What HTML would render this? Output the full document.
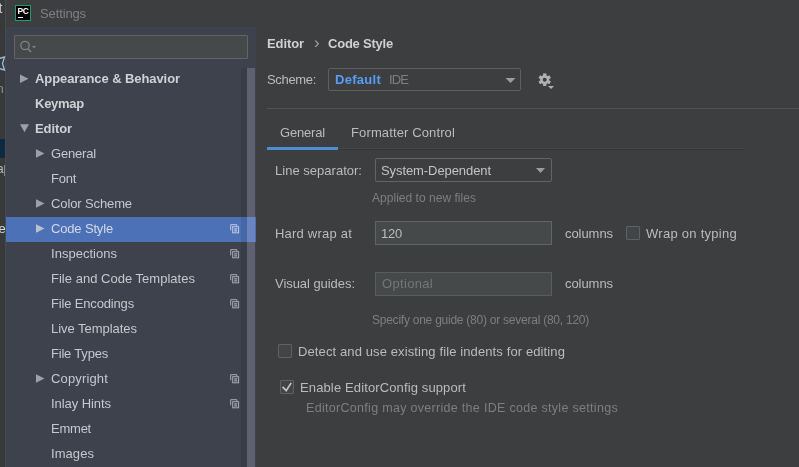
<!DOCTYPE html>
<html><head><meta charset="utf-8"><title>Settings</title>
<style>
html,body{margin:0;padding:0;}
body{width:799px;height:467px;overflow:hidden;position:relative;background:#3c3e40;font-family:"Liberation Sans",sans-serif;}
#root{position:absolute;left:0;top:0;width:799px;height:467px;overflow:hidden;will-change:transform;}
.abs{position:absolute;}
.t{position:absolute;white-space:pre;line-height:20px;height:20px;}
#strip{left:0;top:0;width:6px;height:467px;background:#37393b;overflow:hidden;}
#left{left:6px;top:27px;width:250px;height:440px;background:#3e424c;}
#band{left:241px;top:68px;width:6px;height:399px;background:rgba(20,20,30,0.10);}
#search{left:14px;top:35px;width:232px;height:22px;border:1px solid #646464;background:#45494a;border-radius:1px;}
#sel{left:6px;top:216.6px;width:250px;height:25px;background:#4c71b7;}
#sb{left:247px;top:68px;width:8px;height:399px;background:rgba(195,190,220,0.25);}
.box{position:absolute;border:1px solid #646464;background:#45494a;box-sizing:border-box;}
.cb{position:absolute;width:14px;height:14px;border:1px solid #5f6264;background:#424547;box-sizing:border-box;border-radius:1px;}
svg{position:absolute;overflow:visible;}
</style></head><body><div id="root">
<div class="abs" id="strip"></div>
<div class="abs" style="left:0;top:56px;width:5px;height:20px;background:#333b47;"></div>
<div class="abs" style="left:0;top:139px;width:5px;height:19px;background:#0f2a3f;"></div>
<div class="abs" style="left:5px;top:0;width:1px;height:467px;background:#474b4e;"></div>
<div class="abs" id="left"></div>
<div class="abs" id="search"></div>
<div class="abs" id="sel"></div>
<div class="abs" id="band"></div>
<div class="abs" id="sb"></div>
<!-- title icon -->
<div class="abs" style="left:15px;top:5px;width:16px;height:16px;background:#1f9a74;"></div>
<div class="abs" style="left:16px;top:6px;width:14px;height:14px;background:#000;"></div>
<span class="t" style="left:17.5px;top:6.5px;font-size:8.5px;font-weight:700;color:#fff;line-height:9px;height:9px;letter-spacing:-0.5px;">PC</span>
<div class="abs" style="left:18px;top:16.5px;width:5px;height:1.2px;background:#fff;"></div>
<!-- right -->
<div class="box" style="left:328px;top:68px;width:193px;height:23px;background:#3c3e40;border-color:#5e6060;border-radius:2px;"></div>
<div class="abs" style="left:267px;top:108px;width:532px;height:1px;background:#505254;"></div>
<div class="abs" style="left:267px;top:148px;width:477px;height:1px;background:#444648;"></div>
<div class="abs" style="left:267px;top:149px;width:477px;height:1px;background:#333537;"></div>
<div class="abs" style="left:267px;top:147px;width:71px;height:3px;background:#4e8ed0;"></div>
<div class="box" style="left:375px;top:158px;width:177px;height:24px;border-radius:2px;background:#3c3e40;"></div>
<div class="box" style="left:375px;top:221px;width:177px;height:24px;"></div>
<div class="box" style="left:375px;top:272px;width:177px;height:24px;border-color:#5a5c5e;"></div>
<div class="cb" style="left:626px;top:226px;"></div>
<div class="cb" style="left:278px;top:344px;"></div>
<div class="cb" style="left:280px;top:380px;"></div>
<!-- search icon -->
<svg style="left:0;top:0" width="799" height="467" viewBox="0 0 799 467">
 <circle cx="25" cy="45.5" r="4.2" fill="none" stroke="#7f8386" stroke-width="1.3"/>
 <path d="M28 48.8 L31 52" stroke="#7f8386" stroke-width="1.5" fill="none"/>
 <path d="M32 46 L36 46 L34 48.3 Z" fill="#7f8386"/>
 <path d="M-1 58.5 L4.5 57 L2.5 63.5 L4.5 70 L-1 68.5" fill="none" stroke="#a9b7cc" stroke-width="1.3"/>
 <path d="M4.5 165 V176" stroke="#9a9a9a" stroke-width="0.8"/>
 <!-- tree arrows -->
 <g fill="#9da0a8">
  <path d="M20 74.5 L28.5 78.8 L20 83.1 Z"/>
  <path d="M20 124.2 L29 124.2 L24.5 132.2 Z"/>
  <path d="M36 149.2 L44.5 153.5 L36 157.8 Z"/>
  <path d="M36 199.2 L44.5 203.5 L36 207.8 Z"/>
  <path d="M36 224.2 L44.5 228.5 L36 232.8 Z" fill="#b9c0cf"/>
  <path d="M36 374.2 L44.5 378.5 L36 382.8 Z"/>
 </g>
 <g fill="none" stroke="#c3cbe0" stroke-width="1"><path d="M230.7 230.3 V224.7 H236.8 V226.2"/><rect x="232.7" y="226.7" width="5.9" height="6.1"/><path d="M234.2 228.9 H237.2 M234.2 230.9 H237.2" stroke-width="1.1"/></g>
<g fill="none" stroke="#a9acb2" stroke-width="1"><path d="M230.7 255.3 V249.7 H236.8 V251.2"/><rect x="232.7" y="251.7" width="5.9" height="6.1"/><path d="M234.2 253.9 H237.2 M234.2 255.9 H237.2" stroke-width="1.1"/></g>
<g fill="none" stroke="#a9acb2" stroke-width="1"><path d="M230.7 280.3 V274.7 H236.8 V276.2"/><rect x="232.7" y="276.7" width="5.9" height="6.1"/><path d="M234.2 278.9 H237.2 M234.2 280.9 H237.2" stroke-width="1.1"/></g>
<g fill="none" stroke="#a9acb2" stroke-width="1"><path d="M230.7 305.3 V299.7 H236.8 V301.2"/><rect x="232.7" y="301.7" width="5.9" height="6.1"/><path d="M234.2 303.9 H237.2 M234.2 305.9 H237.2" stroke-width="1.1"/></g>
<g fill="none" stroke="#a9acb2" stroke-width="1"><path d="M230.7 380.3 V374.7 H236.8 V376.2"/><rect x="232.7" y="376.7" width="5.9" height="6.1"/><path d="M234.2 378.9 H237.2 M234.2 380.9 H237.2" stroke-width="1.1"/></g>
<g fill="none" stroke="#a9acb2" stroke-width="1"><path d="M230.7 405.3 V399.7 H236.8 V401.2"/><rect x="232.7" y="401.7" width="5.9" height="6.1"/><path d="M234.2 403.9 H237.2 M234.2 405.9 H237.2" stroke-width="1.1"/></g>
 <!-- combobox arrows -->
 <path d="M505.5 78 L515.5 78 L510.5 83 Z" fill="#9a9da0"/>
 <path d="M536 168 L545 168 L540.5 173 Z" fill="#9a9da0"/>
 <!-- gear -->
 <g transform="translate(544.7 79.7)">
  <g fill="#afb1b3">
   <rect x="-1.6" y="-6.3" width="3.2" height="12.6"/>
   <rect x="-1.6" y="-6.3" width="3.2" height="12.6" transform="rotate(60)"/>
   <rect x="-1.6" y="-6.3" width="3.2" height="12.6" transform="rotate(120)"/>
   <circle r="4.6"/>
  </g>
  <circle r="2" fill="#3c3e40"/>
 </g>
 <path d="M548 86 L554 86 L551 89 Z" fill="#afb1b3"/>
 <!-- check -->
 <path d="M282.6 386.9 L286.2 390.7 L291.2 382.9" fill="none" stroke="#c4c4c4" stroke-width="1.7"/>
</svg>
<span class="t " style="left:40px;top:3.5px;font-size:13px;font-weight:400;color:#7e8184;letter-spacing:-0.123px;">Settings</span>
<span class="t " style="left:35px;top:69.0px;font-size:13px;font-weight:700;color:#cfd1d6;letter-spacing:-0.08px;">Appearance &amp; Behavior</span>
<span class="t " style="left:35px;top:94.0px;font-size:13px;font-weight:700;color:#cfd1d6;letter-spacing:-0.263px;">Keymap</span>
<span class="t " style="left:35px;top:119.0px;font-size:13px;font-weight:700;color:#cfd1d6;letter-spacing:-0.094px;">Editor</span>
<span class="t " style="left:51px;top:144.0px;font-size:13px;font-weight:400;color:#c5c8ce;letter-spacing:-0.179px;">General</span>
<span class="t " style="left:51px;top:169.0px;font-size:13px;font-weight:400;color:#c5c8ce;letter-spacing:-0.254px;">Font</span>
<span class="t " style="left:51px;top:194.0px;font-size:13px;font-weight:400;color:#c5c8ce;letter-spacing:-0.115px;">Color Scheme</span>
<span class="t " style="left:51px;top:219.0px;font-size:13px;font-weight:400;color:#d3d9e8;letter-spacing:-0.159px;">Code Style</span>
<span class="t " style="left:51px;top:244.0px;font-size:13px;font-weight:400;color:#c5c8ce;letter-spacing:0.021px;">Inspections</span>
<span class="t " style="left:51px;top:269.0px;font-size:13px;font-weight:400;color:#c5c8ce;letter-spacing:0.018px;">File and Code Templates</span>
<span class="t " style="left:51px;top:294.0px;font-size:13px;font-weight:400;color:#c5c8ce;letter-spacing:-0.163px;">File Encodings</span>
<span class="t " style="left:51px;top:319.0px;font-size:13px;font-weight:400;color:#c5c8ce;letter-spacing:-0.035px;">Live Templates</span>
<span class="t " style="left:51px;top:344.0px;font-size:13px;font-weight:400;color:#c5c8ce;letter-spacing:-0.202px;">File Types</span>
<span class="t " style="left:51px;top:369.0px;font-size:13px;font-weight:400;color:#c5c8ce;letter-spacing:0.151px;">Copyright</span>
<span class="t " style="left:51px;top:394.0px;font-size:13px;font-weight:400;color:#c5c8ce;letter-spacing:-0.064px;">Inlay Hints</span>
<span class="t " style="left:51px;top:419.0px;font-size:13px;font-weight:400;color:#c5c8ce;letter-spacing:-0.234px;">Emmet</span>
<span class="t " style="left:51px;top:444.0px;font-size:13px;font-weight:400;color:#c5c8ce;letter-spacing:0.06px;">Images</span>
<span class="t " style="left:267px;top:34.0px;font-size:13px;font-weight:700;color:#d0d0d0;letter-spacing:-0.094px;">Editor</span>
<span class="t " style="left:314px;top:32.5px;font-size:17px;font-weight:400;color:#a0a0a0;">›</span>
<span class="t " style="left:328px;top:34.0px;font-size:13px;font-weight:700;color:#d0d0d0;letter-spacing:-0.219px;">Code Style</span>
<span class="t " style="left:267px;top:70.0px;font-size:13px;font-weight:400;color:#bbbbbb;letter-spacing:-0.33px;">Scheme:</span>
<span class="t " style="left:335px;top:70.0px;font-size:13px;font-weight:700;color:#589df6;letter-spacing:0.277px;">Default</span>
<span class="t " style="left:389px;top:70.0px;font-size:13px;font-weight:400;color:#7d8082;letter-spacing:-0.891px;">IDE</span>
<span class="t " style="left:280px;top:123.0px;font-size:13px;font-weight:400;color:#bbbbbb;letter-spacing:-0.179px;">General</span>
<span class="t " style="left:351px;top:123.0px;font-size:13px;font-weight:400;color:#bbbbbb;letter-spacing:0.125px;">Formatter Control</span>
<span class="t " style="left:275px;top:160.5px;font-size:13px;font-weight:400;color:#bbbbbb;letter-spacing:0.018px;">Line separator:</span>
<span class="t " style="left:381px;top:160.5px;font-size:13px;font-weight:400;color:#c4c4c4;letter-spacing:-0.08px;">System-Dependent</span>
<span class="t " style="left:372px;top:187.5px;font-size:12px;font-weight:400;color:#7c7f81;letter-spacing:0.03px;">Applied to new files</span>
<span class="t " style="left:275px;top:223.5px;font-size:13px;font-weight:400;color:#bbbbbb;letter-spacing:0.215px;">Hard wrap at</span>
<span class="t " style="left:381px;top:223.5px;font-size:13px;font-weight:400;color:#bbbbbb;letter-spacing:-0.234px;">120</span>
<span class="t " style="left:565px;top:223.5px;font-size:13px;font-weight:400;color:#bbbbbb;letter-spacing:-0.06px;">columns</span>
<span class="t " style="left:646px;top:223.5px;font-size:13px;font-weight:400;color:#bbbbbb;letter-spacing:0.271px;">Wrap on typing</span>
<span class="t " style="left:275px;top:274.0px;font-size:13px;font-weight:400;color:#bbbbbb;letter-spacing:-0.051px;">Visual guides:</span>
<span class="t " style="left:382px;top:274.0px;font-size:13px;font-weight:400;color:#747678;letter-spacing:0.322px;">Optional</span>
<span class="t " style="left:565px;top:274.0px;font-size:13px;font-weight:400;color:#bbbbbb;letter-spacing:-0.06px;">columns</span>
<span class="t " style="left:372px;top:309.5px;font-size:12px;font-weight:400;color:#7c7f81;letter-spacing:-0.243px;">Specify one guide (80) or several (80, 120)</span>
<span class="t " style="left:298px;top:341.5px;font-size:13px;font-weight:400;color:#bbbbbb;letter-spacing:0.112px;">Detect and use existing file indents for editing</span>
<span class="t " style="left:300px;top:378.0px;font-size:13px;font-weight:400;color:#bbbbbb;letter-spacing:0.126px;">Enable EditorConfig support</span>
<span class="t " style="left:306px;top:397.5px;font-size:12.5px;font-weight:400;color:#7c7f81;letter-spacing:0.302px;">EditorConfig may override the IDE code style settings</span>
<span class="t strip" style="left:-1.5px;top:-2.0px;font-size:14px;font-weight:400;color:#cfcfcf;">t</span>
<span class="t strip" style="left:-3.5px;top:79.0px;font-size:13px;font-weight:400;color:#8c8c8c;">n</span>
<span class="t strip" style="left:-3.5px;top:159.0px;font-size:13px;font-weight:400;color:#b8b8b8;">a</span>
<span class="t strip" style="left:-1.5px;top:218.5px;font-size:13px;font-weight:400;color:#d8d8d8;">e</span>
</div></body></html>
